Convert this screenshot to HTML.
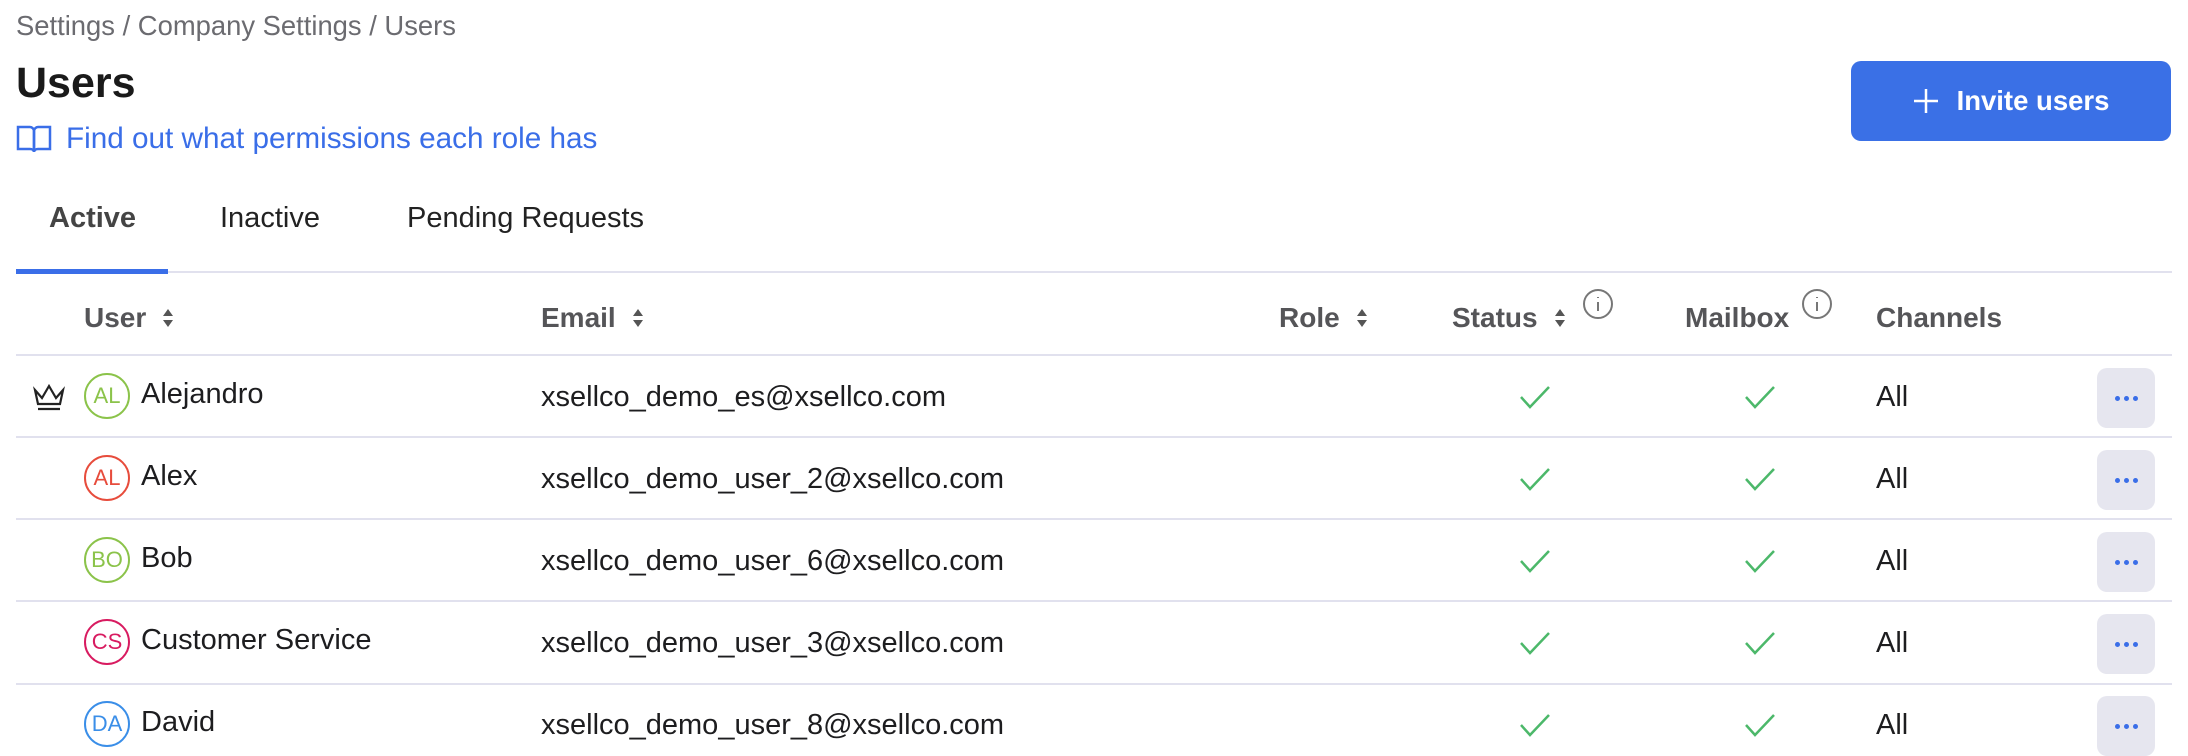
<!DOCTYPE html>
<html><head><meta charset="utf-8"><style>
*{margin:0;padding:0;box-sizing:border-box}
body{width:2188px;height:728px;overflow:hidden;background:#fff;font-family:"Liberation Sans",sans-serif;color:#1d1d1f;position:relative}
.a{position:absolute;white-space:nowrap}
.bc{left:16px;top:10px;font-size:27.4px;color:#6b6b70}
.h1{left:16px;top:59px;font-size:43px;font-weight:bold;color:#1a1a1a}
.link{left:66px;top:122px;font-size:29.7px;color:#3a6ee8}
.btn{left:1851px;top:61px;width:320px;height:80px;background:#3a70e6;border-radius:10px;color:#fff;font-size:27.5px;font-weight:bold;display:flex;align-items:center;justify-content:center;gap:18px}
.tab{top:202px;font-size:29px;color:#222}
.hl{left:16px;width:2156px;height:2px;background:#e1e1ee}
.th{top:302px;font-size:28px;font-weight:bold;color:#555558;display:flex;align-items:center}
.th svg{margin-left:16px}
.td{font-size:29px;color:#1d1d1f}
.av{width:46px;height:46px;border-radius:50%;border:2px solid;display:flex;align-items:center;justify-content:center;font-size:22px}
.dots{left:2097px;width:58px;height:60px;background:#e6e6ef;border-radius:10px;display:flex;align-items:center;justify-content:center;gap:4px}
.dots i{width:5px;height:5px;border-radius:50%;background:#3a6ee8;display:block}
</style></head><body>
<div class="a bc">Settings / Company Settings / Users</div>
<div class="a h1">Users</div>
<svg class="a" style="left:16px;top:124px" width="36" height="32" viewBox="0 0 36 32" fill="none" stroke="#3a6ee8" stroke-width="2.5"><path d="M2 3h12c2 0 4 2 4 4v21c0-2-2-3-4-3H2z"/><path d="M34 3H22c-2 0-4 2-4 4v21c0-2 2-3 4-3h12z"/></svg>
<div class="a link">Find out what permissions each role has</div>
<div class="a btn"><svg width="26" height="26" viewBox="0 0 26 26" stroke="#fff" stroke-width="2.5"><path d="M13 1v24M1 13h24"/></svg>Invite users</div>
<div class="a tab" style="left:49px;font-weight:bold;color:#444">Active</div>
<div class="a tab" style="left:220px">Inactive</div>
<div class="a tab" style="left:407px">Pending Requests</div>
<div class="a hl" style="top:271px"></div>
<div class="a" style="left:16px;top:269px;width:152px;height:5px;background:#3a6ee8"></div>
<div class="a th" style="left:84px">User<svg width="12" height="20" viewBox="0 0 12 20" fill="#555"><path d="M6 1l5 7H1zM6 19l5-7H1z"/></svg></div>
<div class="a th" style="left:541px">Email<svg width="12" height="20" viewBox="0 0 12 20" fill="#555"><path d="M6 1l5 7H1zM6 19l5-7H1z"/></svg></div>
<div class="a th" style="left:1279px">Role<svg width="12" height="20" viewBox="0 0 12 20" fill="#555"><path d="M6 1l5 7H1zM6 19l5-7H1z"/></svg></div>
<div class="a th" style="left:1452px">Status<svg width="12" height="20" viewBox="0 0 12 20" fill="#555"><path d="M6 1l5 7H1zM6 19l5-7H1z"/></svg></div>
<svg class="a" style="left:1582px;top:288px" width="32" height="32" viewBox="0 0 32 32" fill="none" stroke="#777" stroke-width="2"><circle cx="16" cy="16" r="14"/><path d="M16 14v9M16 9v1"/></svg>
<div class="a th" style="left:1685px">Mailbox</div>
<svg class="a" style="left:1801px;top:288px" width="32" height="32" viewBox="0 0 32 32" fill="none" stroke="#777" stroke-width="2"><circle cx="16" cy="16" r="14"/><path d="M16 14v9M16 9v1"/></svg>
<div class="a th" style="left:1876px">Channels</div>
<div class="a hl" style="top:354px"></div>
<div class="a hl" style="top:436px"></div>
<div class="a hl" style="top:518px"></div>
<div class="a hl" style="top:600px"></div>
<div class="a hl" style="top:683px"></div>
<svg class="a" style="left:32px;top:382px" width="34" height="30" viewBox="0 0 34 30" fill="none" stroke="#222" stroke-width="2.2"><path d="M3 8l7 8 7-12 7 12 7-8-3 14H6z"/><path d="M6 27h22"/></svg>

<div class="a av" style="left:84px;top:373px;border-color:#8bc34a;color:#8bc34a">AL</div>
<div class="a td" style="left:141px;top:378px">Alejandro</div>
<div class="a td" style="left:541px;top:381px">xsellco_demo_es@xsellco.com</div>

<div class="a av" style="left:84px;top:455px;border-color:#e74c3c;color:#e74c3c">AL</div>
<div class="a td" style="left:141px;top:460px">Alex</div>
<div class="a td" style="left:541px;top:463px">xsellco_demo_user_2@xsellco.com</div>

<div class="a av" style="left:84px;top:537px;border-color:#8bc34a;color:#8bc34a">BO</div>
<div class="a td" style="left:141px;top:542px">Bob</div>
<div class="a td" style="left:541px;top:545px">xsellco_demo_user_6@xsellco.com</div>

<div class="a av" style="left:84px;top:619px;border-color:#d81b60;color:#d81b60">CS</div>
<div class="a td" style="left:141px;top:624px">Customer Service</div>
<div class="a td" style="left:541px;top:627px">xsellco_demo_user_3@xsellco.com</div>

<div class="a av" style="left:84px;top:701px;border-color:#3a8ee8;color:#3a8ee8">DA</div>
<div class="a td" style="left:141px;top:706px">David</div>
<div class="a td" style="left:541px;top:709px">xsellco_demo_user_8@xsellco.com</div>

<svg class="a" style="left:1518px;top:384px" width="34" height="26" viewBox="0 0 34 26" fill="none" stroke="#4cb86a" stroke-width="2.5"><path d="M3 13l9 10L31 3"/></svg>
<svg class="a" style="left:1743px;top:384px" width="34" height="26" viewBox="0 0 34 26" fill="none" stroke="#4cb86a" stroke-width="2.5"><path d="M3 13l9 10L31 3"/></svg>
<div class="a td" style="left:1876px;top:381px">All</div>
<div class="a dots" style="top:368px"><i></i><i></i><i></i></div>

<svg class="a" style="left:1518px;top:466px" width="34" height="26" viewBox="0 0 34 26" fill="none" stroke="#4cb86a" stroke-width="2.5"><path d="M3 13l9 10L31 3"/></svg>
<svg class="a" style="left:1743px;top:466px" width="34" height="26" viewBox="0 0 34 26" fill="none" stroke="#4cb86a" stroke-width="2.5"><path d="M3 13l9 10L31 3"/></svg>
<div class="a td" style="left:1876px;top:463px">All</div>
<div class="a dots" style="top:450px"><i></i><i></i><i></i></div>

<svg class="a" style="left:1518px;top:548px" width="34" height="26" viewBox="0 0 34 26" fill="none" stroke="#4cb86a" stroke-width="2.5"><path d="M3 13l9 10L31 3"/></svg>
<svg class="a" style="left:1743px;top:548px" width="34" height="26" viewBox="0 0 34 26" fill="none" stroke="#4cb86a" stroke-width="2.5"><path d="M3 13l9 10L31 3"/></svg>
<div class="a td" style="left:1876px;top:545px">All</div>
<div class="a dots" style="top:532px"><i></i><i></i><i></i></div>

<svg class="a" style="left:1518px;top:630px" width="34" height="26" viewBox="0 0 34 26" fill="none" stroke="#4cb86a" stroke-width="2.5"><path d="M3 13l9 10L31 3"/></svg>
<svg class="a" style="left:1743px;top:630px" width="34" height="26" viewBox="0 0 34 26" fill="none" stroke="#4cb86a" stroke-width="2.5"><path d="M3 13l9 10L31 3"/></svg>
<div class="a td" style="left:1876px;top:627px">All</div>
<div class="a dots" style="top:614px"><i></i><i></i><i></i></div>

<svg class="a" style="left:1518px;top:712px" width="34" height="26" viewBox="0 0 34 26" fill="none" stroke="#4cb86a" stroke-width="2.5"><path d="M3 13l9 10L31 3"/></svg>
<svg class="a" style="left:1743px;top:712px" width="34" height="26" viewBox="0 0 34 26" fill="none" stroke="#4cb86a" stroke-width="2.5"><path d="M3 13l9 10L31 3"/></svg>
<div class="a td" style="left:1876px;top:709px">All</div>
<div class="a dots" style="top:696px"><i></i><i></i><i></i></div>
</body></html>
